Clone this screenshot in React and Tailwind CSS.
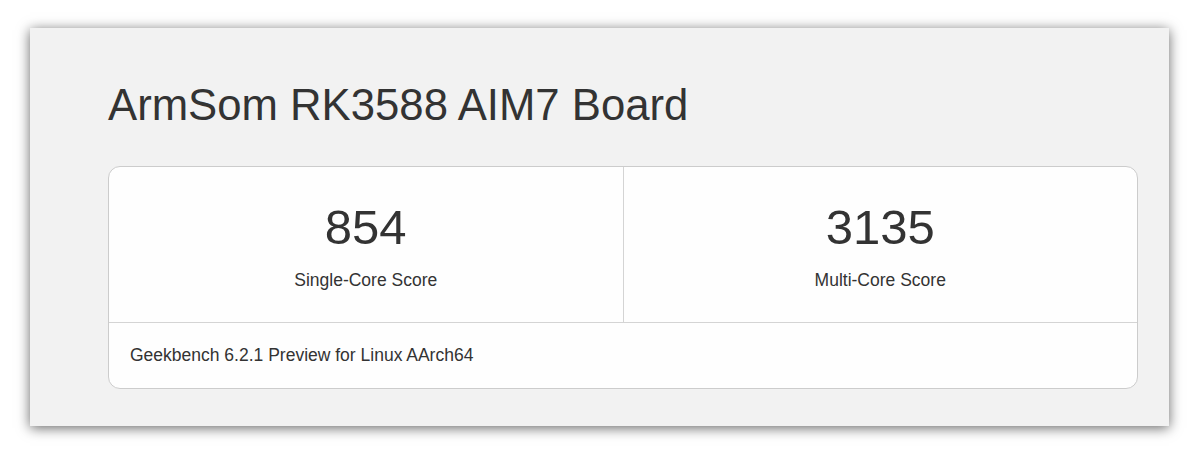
export default function App() {
  const font = { fontFamily: '"Liberation Sans", Arial, sans-serif' };
  return (
    <div className="w-[1199px] h-[458px] bg-white pt-[28px] pl-[30px]" style={font}>
      <div className="w-[1139px] h-[398px] bg-[#f2f2f2] shadow-[0_2px_12px_rgba(0,0,0,0.6)] pl-[78px] pr-[31px] pt-[55px]">
        <h1 className="text-[43.7px] leading-[44px] text-[#333333]">ArmSom RK3588 AIM7 Board</h1>
        <div className="mt-[39px] h-[223px] bg-[#fefefe] border border-[#cccccc] rounded-[12px] flex flex-col text-[#333333]">
          <div className="flex h-[156px] border-b border-[#d4d4d4]">
            <div className="flex-1 flex flex-col items-center border-r border-[#d4d4d4] pt-[36px]">
              <div className="text-[49px] leading-none">854</div>
              <div className="text-[17.5px] mt-[15px]">Single-Core Score</div>
            </div>
            <div className="flex-1 flex flex-col items-center pt-[36px]">
              <div className="text-[49px] leading-none">3135</div>
              <div className="text-[17.5px] mt-[15px]">Multi-Core Score</div>
            </div>
          </div>
          <div className="flex-1 flex items-center pl-[21px] text-[17.5px]">Geekbench 6.2.1 Preview for Linux AArch64</div>
        </div>
      </div>
    </div>
  );
}
